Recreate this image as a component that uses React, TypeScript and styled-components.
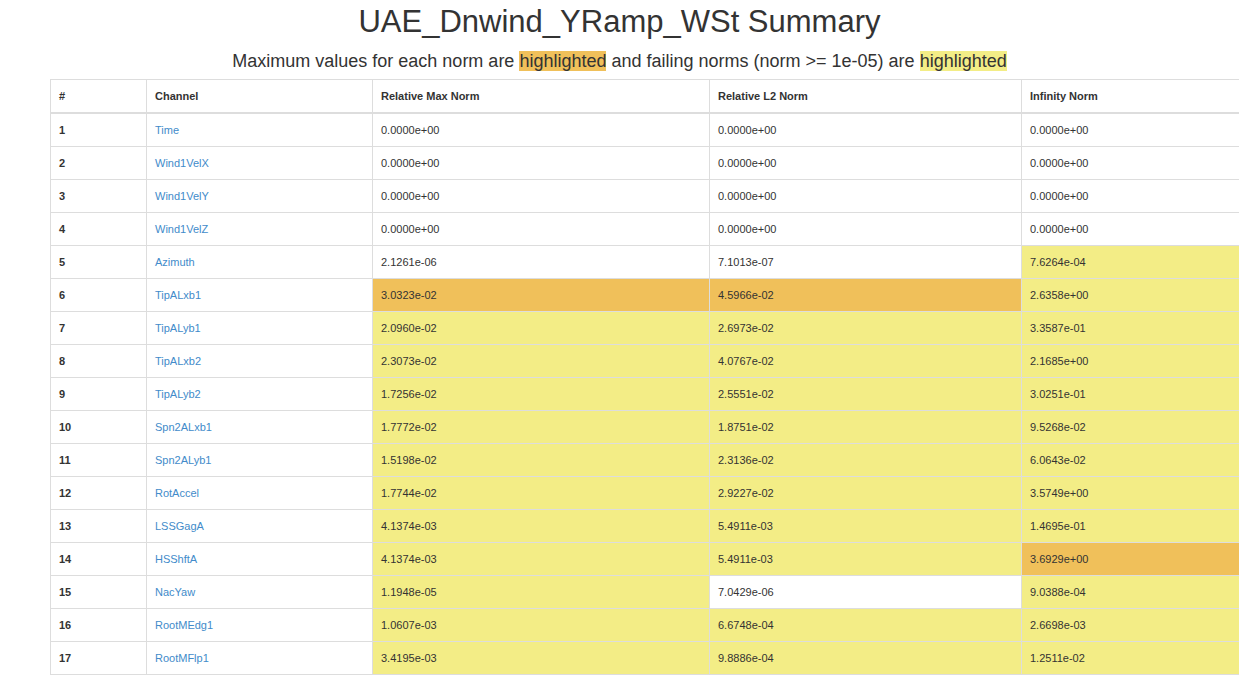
import styled, { createGlobalStyle } from "styled-components";

const Global = createGlobalStyle`
  body {
    margin: 0;
    font-family: "Liberation Sans", Arial, sans-serif;
    color: #333;
    background: #fff;
  }
`;

const Page = styled.div`
  width: 1139px;
  margin: 0 auto;
`;

const Title = styled.h1`
  margin: 4px 0 0;
  text-align: center;
  font-size: 31px;
  font-weight: 400;
  line-height: 36px;
`;

const Sub = styled.h4`
  margin: 10px 0 7px;
  text-align: center;
  font-size: 18px;
  font-weight: 400;
  line-height: 22px;
`;

const Mark = styled.span<{ $max?: boolean }>`
  background: ${(p) => (p.$max ? "#f0c05a" : "#f3ed86")};
`;

const Table = styled.table`
  width: 100%;
  table-layout: fixed;
  border-collapse: collapse;
  font-size: 11px;
`;

const Th = styled.th<{ $w: number }>`
  width: ${(p) => p.$w}px;
  text-align: left;
  font-weight: 700;
  padding: 0 8px;
  height: 32px;
  border: 1px solid #ddd;
  border-bottom: 2px solid #ddd;
`;

const Td = styled.td<{ $bg?: string; $bold?: boolean }>`
  padding: 0 8px;
  height: 32px;
  border: 1px solid #ddd;
  background: ${(p) => p.$bg || "transparent"};
  font-weight: ${(p) => (p.$bold ? 700 : 400)};
`;

const Link = styled.a`
  color: #428bca;
  text-decoration: none;
`;

type Row = [string, string, string, string];

const rows: Row[] = [
  ["Time", "0.0000e+00", "0.0000e+00", "0.0000e+00"],
  ["Wind1VelX", "0.0000e+00", "0.0000e+00", "0.0000e+00"],
  ["Wind1VelY", "0.0000e+00", "0.0000e+00", "0.0000e+00"],
  ["Wind1VelZ", "0.0000e+00", "0.0000e+00", "0.0000e+00"],
  ["Azimuth", "2.1261e-06", "7.1013e-07", "7.6264e-04"],
  ["TipALxb1", "3.0323e-02", "4.5966e-02", "2.6358e+00"],
  ["TipALyb1", "2.0960e-02", "2.6973e-02", "3.3587e-01"],
  ["TipALxb2", "2.3073e-02", "4.0767e-02", "2.1685e+00"],
  ["TipALyb2", "1.7256e-02", "2.5551e-02", "3.0251e-01"],
  ["Spn2ALxb1", "1.7772e-02", "1.8751e-02", "9.5268e-02"],
  ["Spn2ALyb1", "1.5198e-02", "2.3136e-02", "6.0643e-02"],
  ["RotAccel", "1.7744e-02", "2.9227e-02", "3.5749e+00"],
  ["LSSGagA", "4.1374e-03", "5.4911e-03", "1.4695e-01"],
  ["HSShftA", "4.1374e-03", "5.4911e-03", "3.6929e+00"],
  ["NacYaw", "1.1948e-05", "7.0429e-06", "9.0388e-04"],
  ["RootMEdg1", "1.0607e-03", "6.6748e-04", "2.6698e-03"],
  ["RootMFlp1", "3.4195e-03", "9.8886e-04", "1.2511e-02"],
];

const maxCells = new Set(["6-1", "6-2", "14-3"]);

const cellBg = (i: number, c: number, v: string) => {
  if (maxCells.has(`${i}-${c}`)) return "#f0c05a";
  return parseFloat(v) >= 1e-5 ? "#f3ed86" : undefined;
};

export default function App() {
  return (
    <Page>
      <Global />
      <Title>UAE_Dnwind_YRamp_WSt Summary</Title>
      <Sub>
        Maximum values for each norm are <Mark $max>highlighted</Mark> and
        failing norms (norm &gt;= 1e-05) are <Mark>highlighted</Mark>
      </Sub>
      <Table>
        <thead>
          <tr>
            <Th $w={79}>#</Th>
            <Th $w={209}>Channel</Th>
            <Th $w={320}>Relative Max Norm</Th>
            <Th $w={295}>Relative L2 Norm</Th>
            <Th $w={235}>Infinity Norm</Th>
          </tr>
        </thead>
        <tbody>
          {rows.map((r, idx) => {
            const i = idx + 1;
            return (
              <tr key={r[0]}>
                <Td $bold>{i}</Td>
                <Td>
                  <Link href="#">{r[0]}</Link>
                </Td>
                {[r[1], r[2], r[3]].map((v, c) => (
                  <Td key={c} $bg={cellBg(i, c + 1, v)}>
                    {v}
                  </Td>
                ))}
              </tr>
            );
          })}
        </tbody>
      </Table>
    </Page>
  );
}
